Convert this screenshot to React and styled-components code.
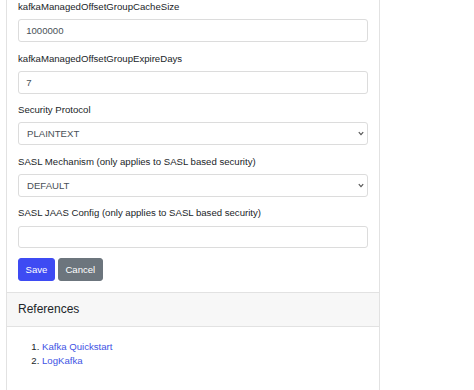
import React from "react";
import styled, { createGlobalStyle } from "styled-components";

const Global = createGlobalStyle`
  html, body { margin: 0; padding: 0; background: #fff; }
  body {
    font-family: "Liberation Sans", Arial, sans-serif;
    font-size: 9.6px;
    line-height: 1.5;
    color: #212529;
  }
  * { box-sizing: border-box; }
`;

const Page = styled.div`
  width: 474px;
  height: 390px;
  overflow: hidden;
  padding-left: 6px;
`;

const Card = styled.div`
  width: 374px;
  border-left: 1px solid #e2e2e2;
  border-right: 1px solid #e2e2e2;
  display: flex;
  flex-direction: column;
`;

const Body = styled.div`
  padding: 0 11px 11px 11px;
`;

const Group = styled.div`
  display: flex;
  flex-direction: column;
  margin-bottom: 9.6px;
`;

const Label = styled.label`
  display: block;
  margin-bottom: 4.8px;
  line-height: 14.4px;
  color: #212529;
`;

const Input = styled.input`
  width: 100%;
  height: 22.8px;
  padding: 0 7.2px;
  font-family: inherit;
  font-size: 9.6px;
  color: #495057;
  background: #fff;
  border: 1px solid #dcdcdc;
  border-radius: 3px;
  outline: none;
`;

const SelectWrap = styled.div`
  position: relative;
  width: 100%;
`;

const Select = styled.select`
  width: 100%;
  height: 22.8px;
  padding: 0 20px 0 8px;
  font-family: inherit;
  font-size: 9.6px;
  color: #495057;
  background: #fff;
  border: 1px solid #dcdcdc;
  border-radius: 3px;
  appearance: none;
  -webkit-appearance: none;
  outline: none;
`;

const Chevron = styled.svg`
  position: absolute;
  right: 4px;
  top: 9px;
  width: 6px;
  height: 5px;
  pointer-events: none;
`;

const Actions = styled.div`
  display: flex;
  gap: 3px;
`;

const Button = styled.button`
  height: 22.8px;
  padding: 0 6.5px;
  font-family: inherit;
  font-size: 9.6px;
  color: #fff;
  border: 1px solid ${(p) => p.$bg};
  background: ${(p) => p.$bg};
  border-radius: 3px;
  cursor: pointer;
`;

const Header = styled.div`
  border-top: 1px solid #e2e2e2;
  border-bottom: 1px solid #e2e2e2;
  background: #f7f7f7;
  padding: 0 11px;
  height: 35px;
  display: flex;
  align-items: center;
`;

const Title = styled.h5`
  margin: 0;
  font-size: 12px;
  font-weight: 400;
  line-height: 14.4px;
  color: #212529;
`;

const RefBody = styled.div`
  padding: 13px 11px 40px 11px;
`;

const List = styled.ol`
  margin: 0;
  padding-left: 24px;
  line-height: 14.4px;
`;

const Link = styled.a`
  color: #4153e4;
  text-decoration: none;
`;

function Field({ label, children }) {
  return (
    <Group>
      <Label>{label}</Label>
      {children}
    </Group>
  );
}

function SelectField({ label, value }) {
  return (
    <Field label={label}>
      <SelectWrap>
        <Select defaultValue={value}>
          <option value={value}>{value}</option>
        </Select>
        <Chevron viewBox="0 0 6 5">
          <path d="M0.8 1.2 L3 3.6 L5.2 1.2" fill="none" stroke="#555" strokeWidth="1.2" />
        </Chevron>
      </SelectWrap>
    </Field>
  );
}

export default function App() {
  return (
    <Page>
      <Global />
      <Card>
        <Body>
          <Field label="kafkaManagedOffsetGroupCacheSize">
            <Input defaultValue="1000000" />
          </Field>
          <Field label="kafkaManagedOffsetGroupExpireDays">
            <Input defaultValue="7" />
          </Field>
          <SelectField label="Security Protocol" value="PLAINTEXT" />
          <SelectField label="SASL Mechanism (only applies to SASL based security)" value="DEFAULT" />
          <Field label="SASL JAAS Config (only applies to SASL based security)">
            <Input defaultValue="" />
          </Field>
          <Actions>
            <Button $bg="#3e4bf3">Save</Button>
            <Button $bg="#6c757d">Cancel</Button>
          </Actions>
        </Body>
        <Header>
          <Title>References</Title>
        </Header>
        <RefBody>
          <List>
            <li><Link href="#">Kafka Quickstart</Link></li>
            <li><Link href="#">LogKafka</Link></li>
          </List>
        </RefBody>
      </Card>
    </Page>
  );
}
